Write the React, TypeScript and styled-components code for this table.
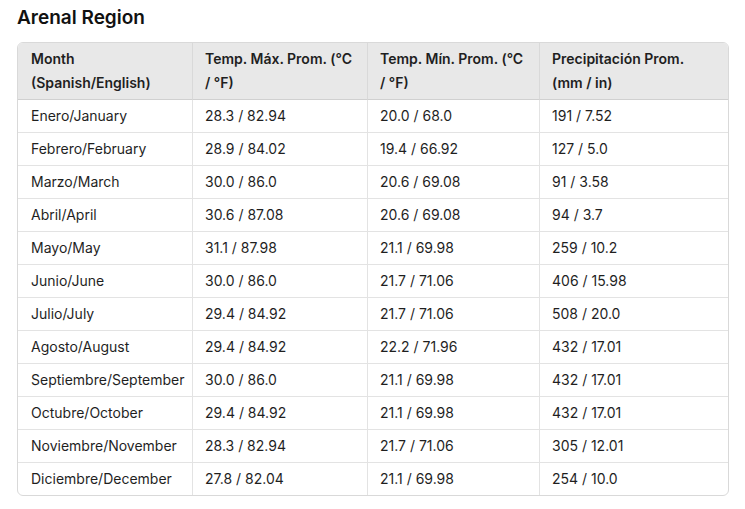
import styled, { createGlobalStyle } from "styled-components";

const GlobalStyle = createGlobalStyle`
  body {
    margin: 0;
    background: #ffffff;
    font-family: Inter, "Liberation Sans", sans-serif;
    color: #1f1f1f;
  }
`;

type Row = [string, string, string, string];

const rows: Row[] = [
  ["Enero/January", "28.3 / 82.94", "20.0 / 68.0", "191 / 7.52"],
  ["Febrero/February", "28.9 / 84.02", "19.4 / 66.92", "127 / 5.0"],
  ["Marzo/March", "30.0 / 86.0", "20.6 / 69.08", "91 / 3.58"],
  ["Abril/April", "30.6 / 87.08", "20.6 / 69.08", "94 / 3.7"],
  ["Mayo/May", "31.1 / 87.98", "21.1 / 69.98", "259 / 10.2"],
  ["Junio/June", "30.0 / 86.0", "21.7 / 71.06", "406 / 15.98"],
  ["Julio/July", "29.4 / 84.92", "21.7 / 71.06", "508 / 20.0"],
  ["Agosto/August", "29.4 / 84.92", "22.2 / 71.96", "432 / 17.01"],
  ["Septiembre/September", "30.0 / 86.0", "21.1 / 69.98", "432 / 17.01"],
  ["Octubre/October", "29.4 / 84.92", "21.1 / 69.98", "432 / 17.01"],
  ["Noviembre/November", "28.3 / 82.94", "21.7 / 71.06", "305 / 12.01"],
  ["Diciembre/December", "27.8 / 82.04", "21.1 / 69.98", "254 / 10.0"],
];

const headers = [
  "Month (Spanish/English)",
  "Temp. Máx. Prom. (°C / °F)",
  "Temp. Mín. Prom. (°C / °F)",
  "Precipitación Prom. (mm / in)",
];

const widths = [174, 175, 172, 189];

const App = () => {
  return (
    <Page>
      <GlobalStyle />
      <Title>Arenal Region</Title>
      <TableFrame>
        <Table>
          <colgroup>
            {widths.map((w, i) => (
              <col key={i} style={{ width: w }} />
            ))}
          </colgroup>
          <thead>
            <tr>
              {headers.map((h, i) => (
                <HeadCell key={i} first={i === 0}>
                  {h}
                </HeadCell>
              ))}
            </tr>
          </thead>
          <tbody>
            {rows.map((r, ri) => (
              <tr key={ri}>
                {r.map((c, ci) => (
                  <Cell key={ci} first={ci === 0} last={ri === rows.length - 1}>
                    {c}
                  </Cell>
                ))}
              </tr>
            ))}
          </tbody>
        </Table>
      </TableFrame>
    </Page>
  );
};

export default App;

const Page = styled.div`
  padding: 6px 16px 0 17px;
  width: 712px;
`;

const Title = styled.h2`
  margin: 0 0 12px;
  font-size: 19px;
  line-height: 24px;
  font-weight: 600;
  color: #111;
`;

const TableFrame = styled.div`
  border: 1px solid #d9d9d9;
  border-radius: 6px;
  overflow: hidden;
`;

const Table = styled.table`
  width: 100%;
  table-layout: fixed;
  border-collapse: separate;
  border-spacing: 0;
  font-size: 14px;
`;

const HeadCell = styled.th<{ first: boolean }>`
  background: #e8e8e8;
  text-align: left;
  font-weight: 600;
  line-height: 24px;
  padding: 4px 12px 4px ${({ first }) => (first ? "13px" : "12px")};
  border-bottom: 1px solid #d0d0d0;
  border-left: ${({ first }) => (first ? "none" : "1px solid #d9d9d9")};
  color: #1f1f1f;
  vertical-align: top;
`;

const Cell = styled.td<{ first: boolean; last: boolean }>`
  line-height: 20px;
  padding: 6px 12px 6px ${({ first }) => (first ? "13px" : "12px")};
  height: 20px;
  border-bottom: ${({ last }) => (last ? "none" : "1px solid #e3e3e3")};
  border-left: ${({ first }) => (first ? "none" : "1px solid #e3e3e3")};
  color: #1f1f1f;
  white-space: nowrap;
`;
